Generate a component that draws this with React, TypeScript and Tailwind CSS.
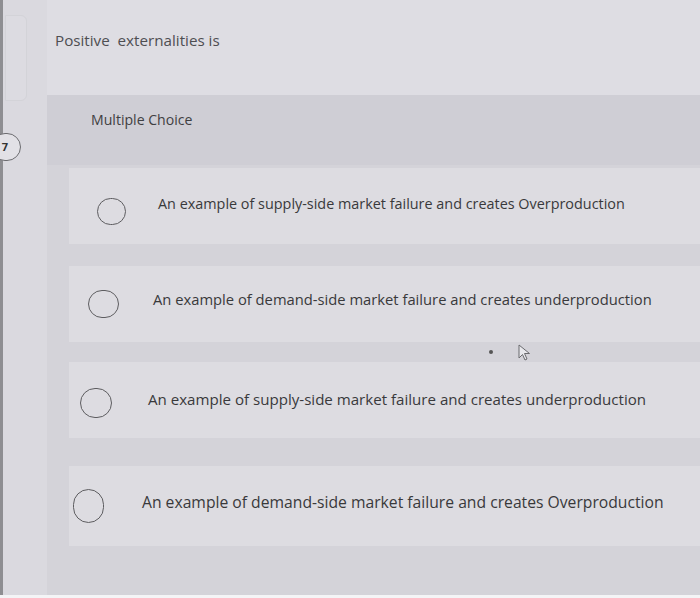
import React from 'react';

type Option = {
  label: string;
  rowClass: string;
  radioClass: string;
  textClass: string;
};

const options: Option[] = [
  {
    label: 'An example of supply-side market failure and creates Overproduction',
    rowClass: 'h-[76px] mt-[3px] pl-[28px] gap-[32px]',
    radioClass: 'w-[29px] h-[27px] mt-[10px]',
    textClass: 'text-[14.4px] -mt-[4px]',
  },
  {
    label: 'An example of demand-side market failure and creates underproduction',
    rowClass: 'h-[76px] mt-[22px] pl-[19px] gap-[34px]',
    radioClass: 'w-[31px] h-[28px] mt-0',
    textClass: 'text-[14.75px] -mt-[10px]',
  },
  {
    label: 'An example of supply-side market failure and creates underproduction',
    rowClass: 'h-[76px] mt-[20px] pl-[11px] gap-[36px]',
    radioClass: 'w-[32px] h-[30px] mt-[6px]',
    textClass: 'text-[15.1px] -mt-[2px]',
  },
  {
    label: 'An example of demand-side market failure and creates Overproduction',
    rowClass: 'h-[80px] mt-[28px] pl-[4px] gap-[38px]',
    radioClass: 'w-[31px] h-[34px] mt-0',
    textClass: 'text-[15.7px] -mt-[6px]',
  },
];

function Radio({ className }: { className: string }) {
  return <span className={`shrink-0 rounded-full border-[1.6px] border-[#5d5d60] ${className}`} />;
}

export default function App() {
  return (
    <div
      className="relative w-[700px] h-[598px] overflow-hidden bg-[#dcdbe1] text-[#3c3c3e]"
      style={{ fontFamily: '"Open Sans", Lato, sans-serif' }}
    >
      <div className="flex h-full">
        {/* Left rail */}
        <div className="w-[47px] shrink-0 border-l-[3px] border-[#8e8e92] bg-[#dad9df] flex flex-col">
          <div className="mt-[15px] ml-[2px] w-[22px] h-[86px] rounded-r-[6px] border border-[#d3d3d8] bg-[#dcdbe1]" />
          <div className="mt-[32px] -ml-[12px] w-[30px] h-[28px] rounded-full border-[1.5px] border-[#6c6c70] bg-[#e2e1e6] flex items-center justify-end pr-[12px] text-[11px] font-bold text-[#333]">
            7
          </div>
        </div>

        {/* Main column */}
        <div className="flex-1 flex flex-col">
          <div className="h-[95px] bg-[#dedde3] pl-[8px] pt-[29px]">
            <p className="text-[15.2px] text-[#4e4e52]">Positive&nbsp; externalities is</p>
          </div>

          <div className="h-[70px] bg-[#cfced5] pl-[44px] pt-[14px]">
            <p className="text-[14.1px] text-[#3f3f42]">Multiple Choice</p>
          </div>

          <div className="flex-1 bg-[#d4d3d9] pl-[22px] flex flex-col">
            {options.map((opt) => (
              <div key={opt.label} className={`flex items-center bg-[#dddce1] ${opt.rowClass}`}>
                <Radio className={opt.radioClass} />
                <span className={`whitespace-nowrap text-[#39393b] ${opt.textClass}`}>{opt.label}</span>
              </div>
            ))}
          </div>
        </div>
      </div>

      {/* cursor */}
      <div className="absolute left-[489px] top-[350px] w-[4px] h-[4px] rounded-full bg-[#555]" />
      <svg className="absolute left-[518px] top-[344px]" width="14" height="18" viewBox="0 0 14 18">
        <path d="M1 1 L1 14 L4.5 10.5 L7 16 L9 15 L6.5 9.5 L11.5 9.5 Z" fill="#e8e8ec" stroke="#6a6a6e" strokeWidth="1" />
      </svg>
      <div className="absolute left-0 right-0 bottom-0 h-[3px] bg-[#f4f4f6]" />
    </div>
  );
}
